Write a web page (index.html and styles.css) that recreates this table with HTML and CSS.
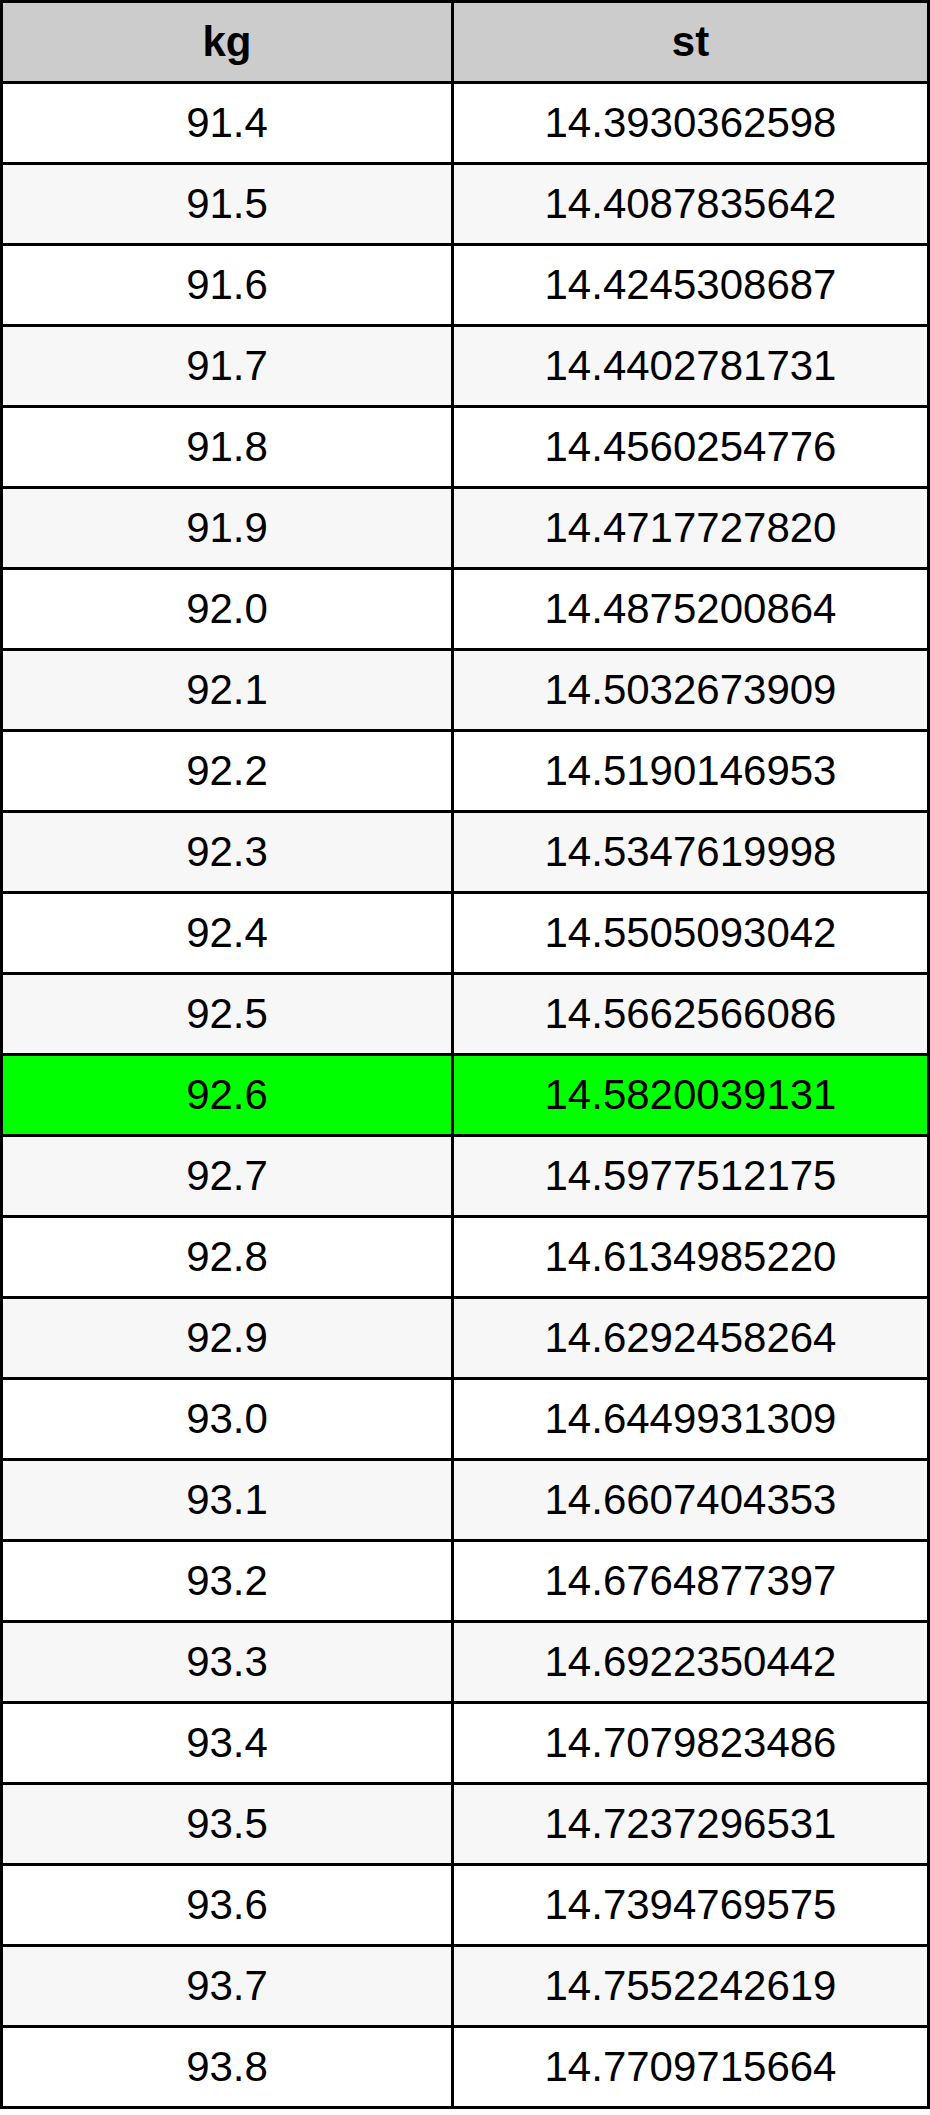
FILE: index.html
```html
<!DOCTYPE html>
<html>
<head>
<meta charset="utf-8">
<link rel="stylesheet" href="styles.css">
</head>
<body>
<table class="conv">
<colgroup><col class="c1"><col class="c2"></colgroup>
<thead>
<tr><th>kg</th><th>st</th></tr>
</thead>
<tbody>
<tr><td>91.4</td><td>14.3930362598</td></tr>
<tr><td>91.5</td><td>14.4087835642</td></tr>
<tr><td>91.6</td><td>14.4245308687</td></tr>
<tr><td>91.7</td><td>14.4402781731</td></tr>
<tr><td>91.8</td><td>14.4560254776</td></tr>
<tr><td>91.9</td><td>14.4717727820</td></tr>
<tr><td>92.0</td><td>14.4875200864</td></tr>
<tr><td>92.1</td><td>14.5032673909</td></tr>
<tr><td>92.2</td><td>14.5190146953</td></tr>
<tr><td>92.3</td><td>14.5347619998</td></tr>
<tr><td>92.4</td><td>14.5505093042</td></tr>
<tr><td>92.5</td><td>14.5662566086</td></tr>
<tr class="hl"><td>92.6</td><td>14.5820039131</td></tr>
<tr><td>92.7</td><td>14.5977512175</td></tr>
<tr><td>92.8</td><td>14.6134985220</td></tr>
<tr><td>92.9</td><td>14.6292458264</td></tr>
<tr><td>93.0</td><td>14.6449931309</td></tr>
<tr><td>93.1</td><td>14.6607404353</td></tr>
<tr><td>93.2</td><td>14.6764877397</td></tr>
<tr><td>93.3</td><td>14.6922350442</td></tr>
<tr><td>93.4</td><td>14.7079823486</td></tr>
<tr><td>93.5</td><td>14.7237296531</td></tr>
<tr><td>93.6</td><td>14.7394769575</td></tr>
<tr><td>93.7</td><td>14.7552242619</td></tr>
<tr><td>93.8</td><td>14.7709715664</td></tr>
</tbody>
</table>
</body>
</html>
```

FILE: styles.css
```css
html, body {
  margin: 0;
  padding: 0;
  background: #ffffff;
}

.conv {
  table-layout: fixed;
  width: 930px;
  border-collapse: separate;
  border-spacing: 3px;
  background: #000000;
  font-family: "Liberation Sans", Arial, sans-serif;
  font-size: 42px;
  color: #000000;
}

.c1 { width: 448px; }
.c2 { width: 473px; }

.conv th,
.conv td {
  height: 78px;
  padding: 0;
  text-align: center;
  vertical-align: middle;
  box-sizing: border-box;
  line-height: 48px;
}

.conv th {
  background: #cccccc;
  font-weight: bold;
}

.conv tbody tr:nth-child(odd) td {
  background: #ffffff;
}

.conv tbody tr:nth-child(even) td {
  background: #f7f7f7;
}

.conv tbody tr.hl td {
  background: #00ff00;
}
```
